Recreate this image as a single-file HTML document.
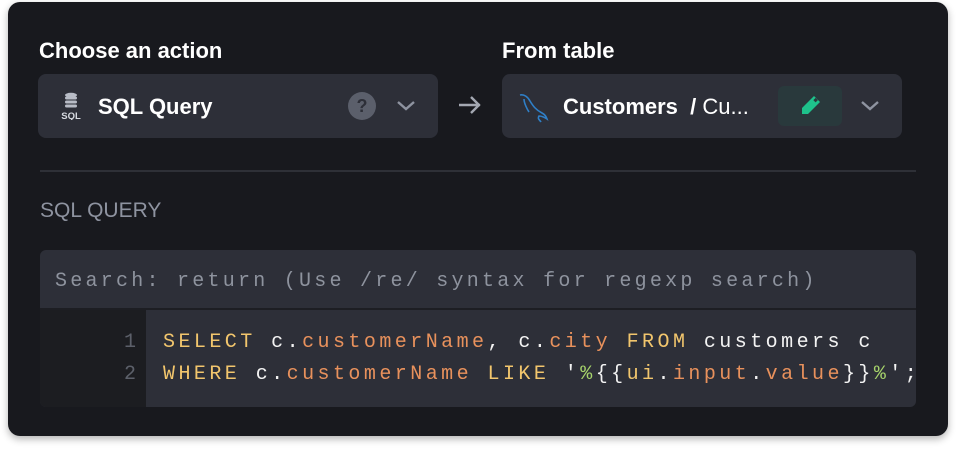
<!DOCTYPE html>
<html><head><style>
*{margin:0;padding:0;box-sizing:border-box}
body{width:956px;height:452px;background:#fff;font-family:"Liberation Sans",sans-serif;position:relative;overflow:hidden}
.card{position:absolute;left:8px;top:2px;width:940px;height:434px;background:#18191e;border-radius:12px;box-shadow:0 3px 8px rgba(0,0,0,.3)}
.lbl{position:absolute;top:38px;font-size:22px;font-weight:bold;color:#fff}
.box{position:absolute;top:74px;width:400px;height:64px;background:#2d2f38;border-radius:8px}
.box .t{position:absolute;top:20px;font-size:22px;font-weight:bold;color:#fff;white-space:nowrap}
.mono{font-family:"Liberation Mono",monospace;font-size:20px;letter-spacing:3.45px;white-space:pre}
</style></head><body>
<div class="card"></div>
<div class="lbl" style="left:39px">Choose an action</div>
<div class="lbl" style="left:502px">From table</div>

<div class="box" style="left:38px">
  <svg style="position:absolute;left:22px;top:18px" width="22" height="28" viewBox="0 0 22 28">
    <g fill="#b8bcc6"><ellipse cx="11" cy="3" rx="6" ry="2.2"/><rect x="5" y="4.5" width="12" height="3" rx="1.5"/><rect x="5" y="8.5" width="12" height="3" rx="1.5"/><rect x="5" y="12.5" width="12" height="3" rx="1.5"/></g>
    <text x="11" y="27" font-family="Liberation Sans" font-size="9.5" font-weight="bold" fill="#d6d9e0" text-anchor="middle">SQL</text>
  </svg>
  <div class="t" style="left:60px">SQL Query</div>
  <div style="position:absolute;left:310px;top:18px;width:28px;height:28px;border-radius:50%;background:#5b5f6b;color:#2d2f38;font-weight:bold;font-size:18px;text-align:center;line-height:28px">?</div>
  <svg style="position:absolute;left:358px;top:26px" width="20" height="12" viewBox="0 0 20 12"><path d="M2 2l8 7 8-7" stroke="#8e93a0" stroke-width="2.4" fill="none"/></svg>
</div>

<svg style="position:absolute;left:457px;top:94px" width="26" height="22" viewBox="0 0 26 22"><path d="M2 11h21M14 3l8 8-8 8" stroke="#a4a8b2" stroke-width="2.4" fill="none"/></svg>

<div class="box" style="left:502px">
  <svg style="position:absolute;left:16px;top:19px" width="34" height="32" viewBox="0 0 34 32"><path d="M2 2c4-1 8 2 10 6 3 5 6 9 12 12 2 1 4 3 5 6-3-2-5-3-8-3-2 3 1 4 2 6M6 6c0 4 3 10 5 13" stroke="#2f7fc7" stroke-width="1.6" fill="none"/></svg>
  <div class="t" style="left:61px">Customers&nbsp; / <span style="font-weight:normal">Cu...</span></div>
  <div style="position:absolute;left:276px;top:12px;width:64px;height:40px;background:#29393c;border-radius:6px">
    <svg style="position:absolute;left:20px;top:8px" width="24" height="24" viewBox="0 0 24 24"><path d="M16 2l6 6-12 12H4v-6z" fill="#1ec28b"/><rect x="16" y="4.5" width="3.2" height="3.2" transform="rotate(45 17.6 6.1)" fill="#29393c"/></svg>
  </div>
  <svg style="position:absolute;left:358px;top:26px" width="20" height="12" viewBox="0 0 20 12"><path d="M2 2l8 7 8-7" stroke="#8e93a0" stroke-width="2.4" fill="none"/></svg>
</div>

<div style="position:absolute;left:40px;top:170px;width:876px;height:2px;background:#2e3037"></div>
<div style="position:absolute;left:40px;top:199px;font-size:21px;color:#8e93a0">SQL QUERY</div>

<div style="position:absolute;left:40px;top:250px;width:876px;height:157px;background:#2d2f38;border-radius:6px;overflow:hidden">
  <div style="position:absolute;left:0;top:58px;width:876px;height:2px;background:#1d1e23"></div>
  <div style="position:absolute;left:0;top:60px;width:106px;height:97px;background:#1c1d21"></div>
  <div class="mono" style="position:absolute;left:15px;top:20px;color:#8e939e;letter-spacing:3.25px">Search: return (Use /re/ syntax for regexp search)</div>
  <div class="mono" style="position:absolute;left:84px;top:77px;line-height:32px;color:#5c606a;letter-spacing:0">1
2</div>
  <div class="mono" style="position:absolute;left:123px;top:77px;line-height:32px;color:#f3f3f3"><span style="color:#f2c66d">SELECT</span> c.<span style="color:#e8915c">customerName</span>, c.<span style="color:#e8915c">city</span> <span style="color:#f2c66d">FROM</span> customers c
<span style="color:#f2c66d">WHERE</span> c.<span style="color:#e8915c">customerName</span> <span style="color:#f2c66d">LIKE</span> '<span style="color:#a6d36b">%</span>{{<span style="color:#f2c66d">ui</span>.<span style="color:#e8915c">input</span>.<span style="color:#e8915c">value</span>}}<span style="color:#a6d36b">%</span>';</div>
</div>
</body></html>
